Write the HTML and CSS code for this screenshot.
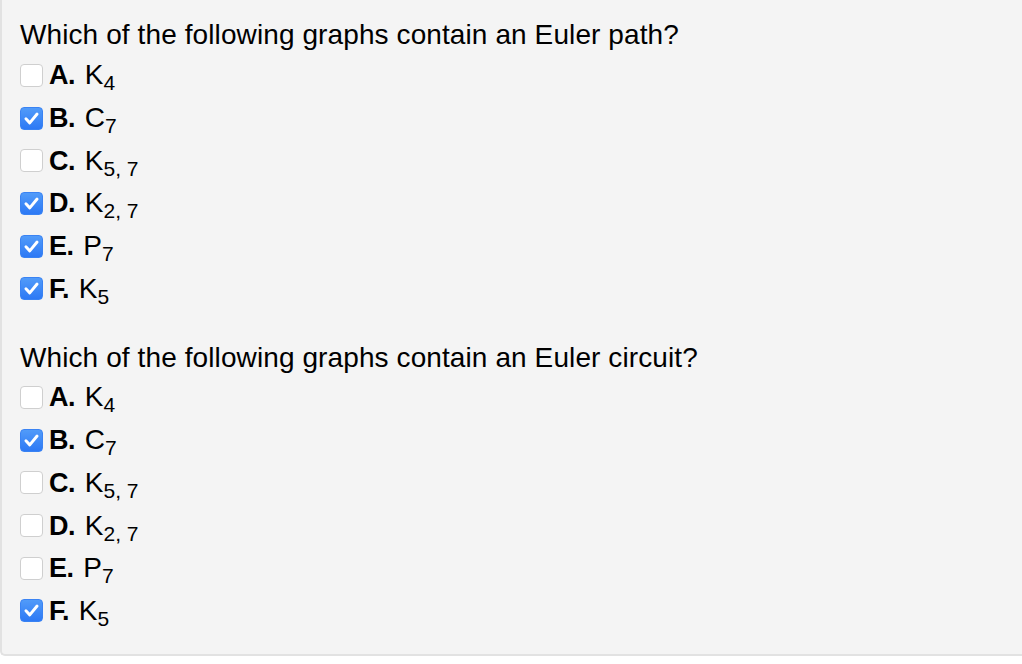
FILE: index.html
```html
<!DOCTYPE html>
<html>
<head>
<meta charset="utf-8">
<link rel="stylesheet" href="styles.css">
</head>
<body>
<div class="panel">
  <div class="question">
    <div class="prompt">Which of the following graphs contain an Euler path?</div>
    <div class="opts">
      <div class="opt"><span class="box"></span><span class="txt"><b class="lbl">A.</b> K<sub>4</sub></span></div>
      <div class="opt"><span class="box on"><svg viewBox="0 0 23 23"><path d="M5.4 11.9 L9.6 16.3 L17.6 6.6"/></svg></span><span class="txt"><b class="lbl">B.</b> C<sub>7</sub></span></div>
      <div class="opt"><span class="box"></span><span class="txt"><b class="lbl">C.</b> K<sub>5, 7</sub></span></div>
      <div class="opt"><span class="box on"><svg viewBox="0 0 23 23"><path d="M5.4 11.9 L9.6 16.3 L17.6 6.6"/></svg></span><span class="txt"><b class="lbl">D.</b> K<sub>2, 7</sub></span></div>
      <div class="opt"><span class="box on"><svg viewBox="0 0 23 23"><path d="M5.4 11.9 L9.6 16.3 L17.6 6.6"/></svg></span><span class="txt"><b class="lbl">E.</b> P<sub>7</sub></span></div>
      <div class="opt"><span class="box on"><svg viewBox="0 0 23 23"><path d="M5.4 11.9 L9.6 16.3 L17.6 6.6"/></svg></span><span class="txt"><b class="lbl">F.</b> K<sub>5</sub></span></div>
    </div>
  </div>
  <div class="question second">
    <div class="prompt">Which of the following graphs contain an Euler circuit?</div>
    <div class="opts">
      <div class="opt"><span class="box"></span><span class="txt"><b class="lbl">A.</b> K<sub>4</sub></span></div>
      <div class="opt"><span class="box on"><svg viewBox="0 0 23 23"><path d="M5.4 11.9 L9.6 16.3 L17.6 6.6"/></svg></span><span class="txt"><b class="lbl">B.</b> C<sub>7</sub></span></div>
      <div class="opt"><span class="box"></span><span class="txt"><b class="lbl">C.</b> K<sub>5, 7</sub></span></div>
      <div class="opt"><span class="box"></span><span class="txt"><b class="lbl">D.</b> K<sub>2, 7</sub></span></div>
      <div class="opt"><span class="box"></span><span class="txt"><b class="lbl">E.</b> P<sub>7</sub></span></div>
      <div class="opt"><span class="box on"><svg viewBox="0 0 23 23"><path d="M5.4 11.9 L9.6 16.3 L17.6 6.6"/></svg></span><span class="txt"><b class="lbl">F.</b> K<sub>5</sub></span></div>
    </div>
  </div>
</div>
</body>
</html>
```

FILE: styles.css
```css
html, body {
  margin: 0;
  padding: 0;
  background: #ffffff;
}
body {
  font-family: "Liberation Sans", Arial, sans-serif;
  color: #000;
  width: 1022px;
  height: 664px;
  overflow: hidden;
}
.panel {
  box-sizing: border-box;
  width: 1030px;
  height: 656px;
  background: #f4f4f4;
  border-left: 2px solid #e2e2e2;
  border-bottom: 2px solid #e2e2e2;
  border-bottom-left-radius: 5px;
  padding: 21px 0 0 18px;
}
.prompt {
  font-size: 28px;
  line-height: 28px;
  height: 28px;
  letter-spacing: 0.1px;
}
.opts {
  display: flex;
  flex-direction: column;
  margin-top: 5px;
}
.second {
  margin-top: 34px;
}
.second .opts {
  margin-top: 4px;
}
.opt {
  height: 42.7px;
  display: flex;
  align-items: center;
}
.box {
  box-sizing: border-box;
  width: 23px;
  height: 23px;
  border: 1px solid #cfcfcf;
  border-radius: 4px;
  background: #ffffff;
  margin-right: 6px;
  display: flex;
  align-items: center;
  justify-content: center;
  flex: none;
}
.box.on {
  border: 1px solid #3a83f3;
  background: linear-gradient(#519bf9, #2d79f5);
}
.box svg {
  width: 23px;
  height: 23px;
  fill: none;
  stroke: #ffffff;
  stroke-width: 3.2;
  stroke-linecap: round;
  stroke-linejoin: round;
}
.txt {
  font-size: 28px;
  line-height: 26px;
  white-space: nowrap;
}
.lbl {
  font-weight: bold;
  font-size: 27px;
  letter-spacing: -0.5px;
  margin-right: 2px;
}
.txt sub {
  font-size: 21px;
  line-height: 0;
  vertical-align: -6px;
}
```
